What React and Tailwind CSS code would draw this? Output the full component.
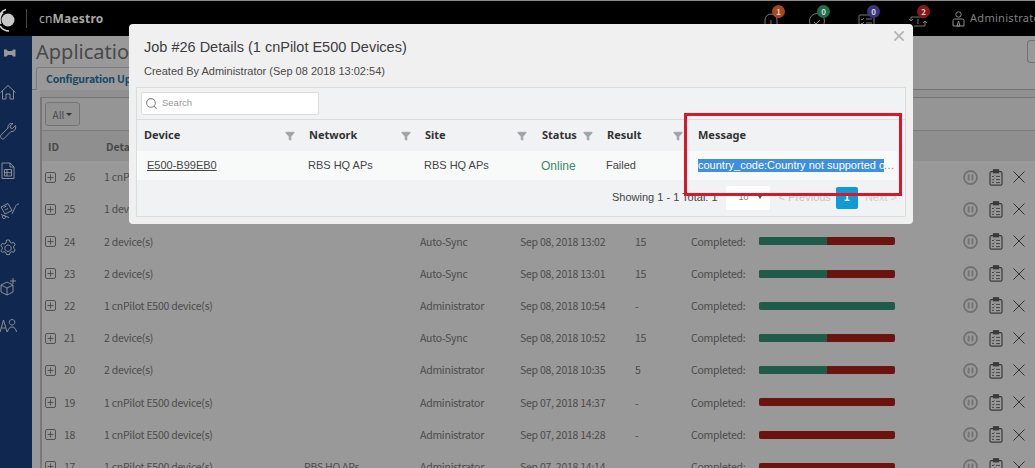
import React from "react";
import { Search, Filter } from "lucide-react";

const jobs = [
  { id: 26, details: "1 cnPilot E500 device(s)", net: "", by: "Auto-Sync", date: "Sep 08, 2018 13:02", count: "15", split: false },
  { id: 25, details: "1 device(s)", net: "", by: "Auto-Sync", date: "Sep 08, 2018 13:02", count: "15", split: false },
  { id: 24, details: "2 device(s)", net: "", by: "Auto-Sync", date: "Sep 08, 2018 13:02", count: "15", split: true },
  { id: 23, details: "2 device(s)", net: "", by: "Auto-Sync", date: "Sep 08, 2018 13:01", count: "15", split: true },
  { id: 22, details: "1 cnPilot E500 device(s)", net: "", by: "Administrator", date: "Sep 08, 2018 10:54", count: "-", ok: true },
  { id: 21, details: "2 device(s)", net: "", by: "Auto-Sync", date: "Sep 08, 2018 10:52", count: "15", split: true },
  { id: 20, details: "2 device(s)", net: "", by: "Administrator", date: "Sep 08, 2018 10:35", count: "5", split: true },
  { id: 19, details: "1 cnPilot E500 device(s)", net: "", by: "Administrator", date: "Sep 07, 2018 14:37", count: "-" },
  { id: 18, details: "1 cnPilot E500 device(s)", net: "", by: "Administrator", date: "Sep 07, 2018 14:28", count: "-" },
  { id: 17, details: "1 cnPilot E500 device(s)", net: "RBS HQ APs", by: "Administrator", date: "Sep 07, 2018 14:14", count: "-" },
];

const ClipboardIcon = () => (
  <svg width="14" height="17" viewBox="0 0 14 17" fill="none" stroke="#606060" strokeWidth="1.2">
    <rect x="1" y="2.6" width="12" height="13.6" rx="1.5" />
    <rect x="4.5" y="0.8" width="5" height="3" fill="#606060" />
    <path d="M3 7l1 1 1.4-1.6M7 7.4h4M3 10.2l1 1 1.4-1.6M7 10.6h4M3 13.4h2M7 13.6h4" strokeWidth="0.9" />
  </svg>
);

const PauseIcon = () => (
  <svg width="15" height="15" viewBox="0 0 15 15" fill="none" stroke="#bdbdbd">
    <circle cx="7.5" cy="7.5" r="6.5" strokeWidth="1.8" />
    <path d="M5.6 4.6v5.800M9.4 4.6v5.800" strokeWidth="1.8" />
  </svg>
);

const ExpandIcon = () => (
  <svg width="11" height="11" viewBox="0 0 11 11" fill="none" stroke="#7b7b7b" strokeWidth="0.9">
    <rect x="0.5" y="0.5" width="10" height="10" rx="1.5" />
    <path d="M5.5 2.5v6M2.5 5.5h6" />
  </svg>
);

const CloseIcon = ({ size, stroke, width }) => (
  <svg width={size} height={size} viewBox="0 0 12 12" fill="none" stroke={stroke} strokeWidth={width}>
    <path d="M0.5 0.5l11 11M11.5 0.5l-11 11" />
  </svg>
);

const sideIcons = [
  <path key="pin" d="M0 8h4V4.500h2.500L8 6h4l1-1.500h2.500v7H13L12 10H8l-1.500 1.500H4V8z" fill="#ffffff" stroke="none" />,
  <path key="home" d="M0.500 8.500L8 1.500l7.500 7M2.500 7v8h3.500v-5h4v5h3.500V7" />,
  <path key="wrench" d="M15.500 2.500l-3 3-2-.500-.500-2 3-2.500c-3-.800-5.500 1.500-5 4.500L1 12c-1 1-.500 2.500.500 3.500s2.500.500 3-.500L11 8.500c3 .700 5.500-2.500 4.500-6z" />,
  <path key="doc" d="M2 1h8l4 4v11.500H2zM10 1v4h4M4.500 7.500h7v6.500h-7zM4.500 10.700h7M7 7.500v6.500" />,
  <path key="dolly" d="M19 3c-2 0-3 1-3.500 2.500L12 13M1 6l7-3.500 4 7-7 3.500zM3.500 6.500l3-1.500M5 9l3-1.500M1 13.500l8 3M4 14.500a1.600 1.600 0 1 0 .1 0" />,
  <path key="gear" d="M6.500 1h3l.500 2 1.700 1 2-.700 1.500 2.600-1.500 1.400v2l1.500 1.400-1.500 2.600-2-.700-1.700 1-.500 2h-3l-.500-2-1.700-1-2 .700L.800 11.700l1.500-1.400v-2L.800 6.900l1.500-2.600 2 .700 1.700-1zM8 6a3.200 3.200 0 1 0 .1 0" />,
  <path key="box" d="M1 7l6-3 6 3v7l-6 3-6-3zM1 7l6 3 6-3M7 10v7M13 0v6M10 3h6" />,
  <path key="people" d="M0 15L3.500 3 7 15M1.500 11h4M12 2.500a2.800 2.800 0 1 0 .1 0M7.500 15c.500-3 2-5 4.500-5s4 2 4.500 5" />,
];

const TopBadge = ({ n, color, className, children }) => (
  <div className={`relative w-[20px] h-[20px] ${className || ""}`}>
    {children}
    <span className={`absolute left-[9px] -top-[6px] w-[13px] h-[13px] rounded-full text-[8px] leading-[13px] text-center text-[#d8d8d8] font-bold ${color}`}>
      {n}
    </span>
  </div>
);

const FilterMark = () => <Filter size={10} className="text-[#9ea3a5] fill-[#9ea3a5]" />;

export default function App() {
  return (
    <div className="relative w-[1035px] h-[468px] overflow-hidden bg-white font-['Noto_Sans_CJK_SC','Noto_Sans',sans-serif]">
      {/* top bar */}
      <header className="h-[36px] bg-black border-t border-[#8a8a8a] flex items-center text-[#c8c8c8]">
        <svg width="16" height="26" viewBox="0 0 16 26" fill="none" className="shrink-0">
          <circle cx="8" cy="14" r="6.500" fill="#c8c8c8" />
          <path d="M6 3.500C1.500 4.500-1 9-.5 14" stroke="#d8d8d8" strokeWidth="1.500" />
          <path d="M3 6.500C0 9-1 14 1 18" stroke="#d8d8d8" strokeWidth="1.500" />
          <path d="M0 20c2 3 5 5 9 5" stroke="#d8d8d8" strokeWidth="1.500" />
        </svg>
        <div className="w-px h-[19px] bg-[#444] ml-[10px]" />
        <div className="ml-[12px] text-[12px] tracking-[0.2px] font-['Noto_Sans',sans-serif] text-[#a8a8a8]">
          cn<span className="font-bold">Maestro</span>
        </div>
        <div className="ml-auto flex items-center pr-0 text-[#8e8e8e]">
          <div className="flex gap-[30px] mr-[24px] mt-[5px]">
            <TopBadge n="1" color="bg-[#a8461e]" className="-mr-[5px]">
              <svg width="16" height="20" viewBox="0 0 16 20" fill="none" stroke="#777777"><path d="M2 17V9a6 6 0 0 1 12 0v8M8 9v5" /></svg>
            </TopBadge>
            <TopBadge n="0" color="bg-[#1f7048]">
              <svg width="18" height="20" viewBox="0 0 18 20" fill="none" stroke="#777777"><circle cx="9" cy="10" r="7.500" /><path d="M6 11l2 2 4-4" /></svg>
            </TopBadge>
            <TopBadge n="0" color="bg-[#3b3480]">
              <svg width="18" height="20" viewBox="0 0 18 20" fill="none" stroke="#777777"><rect x="1" y="4" width="15" height="11" rx="1" /><path d="M3 8l1 1 2-2M8 8h6M3 12l1 1 2-2M8 12h6" /></svg>
            </TopBadge>
            <TopBadge n="2" color="bg-[#8b1818]">
              <svg width="20" height="20" viewBox="0 0 20 20" fill="none" stroke="#777777"><path d="M3 9V6h12M1 8l2 2 2-2M17 10v5H6M15 12l2-2 2 2M10 8v5" /></svg>
            </TopBadge>
          </div>
          <svg width="13" height="16" viewBox="0 0 13 16" fill="none" stroke="#8e8e8e" className="mr-[5px]">
            <circle cx="6.500" cy="3.500" r="2.700" />
            <path d="M1 15V9.500a1.500 1.500 0 0 1 1.500-1.500h8A1.500 1.500 0 0 1 12 9.500V15zM6.500 10l-1.500 5h3z" />
          </svg>
          <span className="text-[11px] tracking-[0.3px] font-['Noto_Sans',sans-serif] whitespace-nowrap w-[65px] overflow-hidden text-[#808080]">Administrator</span>
        </div>
      </header>

      <div className="flex h-[432px]">
        {/* sidebar */}
        <aside className="w-[32px] shrink-0 bg-[#1b4184] pt-[9px] flex flex-col gap-[20.900px]">
          {sideIcons.map((icon, i) => (
            <svg key={i} width="19" height="18" viewBox="0 0 19 18" fill="none" stroke="#ffffff" strokeWidth="1" strokeOpacity="0.9">
              {icon}
            </svg>
          ))}
        </aside>

        {/* page */}
        <main className="flex-1 min-w-0">
          <div className="pl-[4px] h-[31px] flex items-center justify-between">
            <h1 className="text-[20px] text-[#7a7a7a] font-['Noto_Sans',sans-serif] whitespace-nowrap">Application : Jobs</h1>
            <div className="w-[8px] h-[23px] border border-r-0 border-[#bbbbbb] rounded-l-sm" />
          </div>
          <div className="h-[23px] border-b border-[#bdbdbd] pl-[4px]">
            <div className="h-[23px] w-[260px] border border-b-[#ffffff] border-[#cfcfcf] rounded-t-[3px] pl-[9px] text-[10.500px] tracking-[-0.2px] leading-[21px] font-bold text-[#2b79a8]">
              Configuration Updates
            </div>
          </div>
          <div className="h-[8px] ml-[8px] border-b border-[#c4c4c4] bg-[#f1f1f1]" />

          <section className="ml-[8px] border-l-2 border-[#c8c8c8]">
            <div className="h-[33px] border-b border-[#cfcfcf] pl-[3px] pt-[4px] bg-[#f8f8f8]">
              <button className="w-[35px] h-[24px] border border-[#c2c2c2] rounded-[3px] bg-[#f2f2f2] text-[10px] text-[#7a7a7a] flex items-center justify-center gap-[2px]">
                All<span className="w-0 h-0 border-x-[3px] border-x-transparent border-t-[3px] border-t-[#555]" />
              </button>
            </div>
            <div className="h-[30px] grid grid-cols-[19px_40px_200px] items-center pl-[5px] pt-[2px] bg-[#eeeeee] text-[10.500px] font-bold text-[#7b7b7b]">
              <span className="col-start-2 -ml-[18px]">ID</span>
              <span>Details</span>
            </div>
            {jobs.map((job) => (
              <div
                key={job.id}
                className="h-[32.200px] grid grid-cols-[19px_40px_200px_116px_100px_115px_56px_68px_204px_26px_24px_12px] items-center pl-[3px] text-[10.500px] tracking-[-0.25px] text-[#808080] whitespace-nowrap"
              >
                <ExpandIcon />
                <span>{job.id}</span>
                <span>{job.details}</span>
                <span>{job.net}</span>
                <span>{job.by}</span>
                <span>{job.date}</span>
                <span>{job.count}</span>
                <span>Completed:</span>
                <div className="w-[136px] h-[8px] rounded-[2px] overflow-hidden flex bg-[#b3201a]">
                  {(job.split || job.ok) && <div className={`h-full bg-[#32997a] ${job.ok ? "w-full" : "w-1/2"}`} />}
                </div>
                <PauseIcon />
                <ClipboardIcon />
                <CloseIcon size={12} stroke="#555555" width={1} />
              </div>
            ))}
          </section>
        </main>
      </div>

      {/* dim layer */}
      <div className="absolute inset-0 top-[36px] bg-black/40" />

      {/* job details modal */}
      <div className="absolute left-[129px] top-[24px] w-[784px] h-[200px] bg-[#f0f0f0] rounded-[4px] px-[7px] font-['Liberation_Sans',sans-serif] text-[#333]">
        <div className="absolute right-[9px] top-[7px]">
          <CloseIcon size={10} stroke="#b5b5b5" width={2.200} />
        </div>
        <h2 className="pl-[8px] pt-[14px] h-[36px] text-[14.500px] leading-[18px] text-[#3d3d3d]">
          Job #26 Details (1 cnPilot E500 Devices)
        </h2>
        <p className="pl-[8px] h-[27px] pt-[3px] text-[11px] leading-[16px] text-[#4a4a4a]">
          Created By Administrator (Sep 08 2018 13:02:54)
        </p>
        <div className="w-[770px] h-[130px] border border-[#dcdcdc] bg-[#f0f2f3]">
          <div className="h-[32px] pt-[4px] pl-[4px] border-b border-[#dcdcdc]">
            <div className="w-[178px] h-[23px] bg-white border border-[#dddddd] rounded-[2px] flex items-center pl-[3px] gap-[4px]">
              <Search size={13} className="text-[#8a8a8a]" />
              <span className="text-[9.500px] text-[#999]">Search</span>
            </div>
          </div>
          <div className="h-[31px] w-[760px] grid grid-cols-[165px_116px_117px_65px_91px_1fr] items-center pl-[7px] text-[11px] font-bold text-[#333] font-['Noto_Sans',sans-serif]">
            <div className="flex items-center justify-between pr-[14px]"><span>Device</span><FilterMark /></div>
            <div className="flex items-center justify-between pr-[14px]"><span>Network</span><FilterMark /></div>
            <div className="flex items-center justify-between pr-[15px]"><span>Site</span><FilterMark /></div>
            <div className="flex items-center justify-between pr-[14px]"><span>Status</span><FilterMark /></div>
            <div className="flex items-center justify-between pr-[15px]"><span>Result</span><FilterMark /></div>
            <span>Message</span>
          </div>
          <div className="h-[29px] w-[760px] bg-[#f8fafa] grid grid-cols-[165px_116px_117px_65px_91px_1fr] items-center pl-[7px] text-[11px] text-[#444]">
            <a className="underline ml-[3px] w-fit">E500-B99EB0</a>
            <span className="-ml-[1px]">RBS HQ APs</span>
            <span className="-ml-[1px]">RBS HQ APs</span>
            <span className="-ml-[1px] text-[12px] text-[#3a8a68]">Online</span>
            <span className="-ml-[1px]">Failed</span>
            <div className="flex w-[198px] items-center">
              <span className="bg-[#3f8fe0] text-white whitespace-nowrap overflow-hidden w-[186px] leading-[13px]">country_code:Country not supported on</span>
              <span className="text-[#888] tracking-[0.5px]">...</span>
            </div>
          </div>
          <div className="h-[35px] flex items-center pl-[475px] text-[11px] text-[#444] whitespace-nowrap">
            <span>Showing 1 - 1 Total: 1</span>
            <div className="ml-[8px] w-[44px] h-[24px] bg-white rounded-[2px] flex items-center justify-between px-[13px] text-[9px] text-[#777]">
              10<span className="-mr-[5px] w-0 h-0 border-x-[2px] border-x-transparent border-t-[3px] border-t-[#555]" />
            </div>
            <span className="ml-[9px] text-[#c6c6c6]">&lt; Previous</span>
            <span className="ml-[5px] w-[22px] h-[22px] rounded-[2px] bg-[#0e9bd8] text-white text-center leading-[22px] font-bold text-[10px]">1</span>
            <span className="ml-[7px] text-[#d0d0d0]">Next &gt;</span>
          </div>
        </div>
      </div>

      {/* red callout */}
      <div className="absolute left-[684px] top-[113px] w-[218px] h-[83px] border-[3.500px] border-[#d8182a]" />
    </div>
  );
}
